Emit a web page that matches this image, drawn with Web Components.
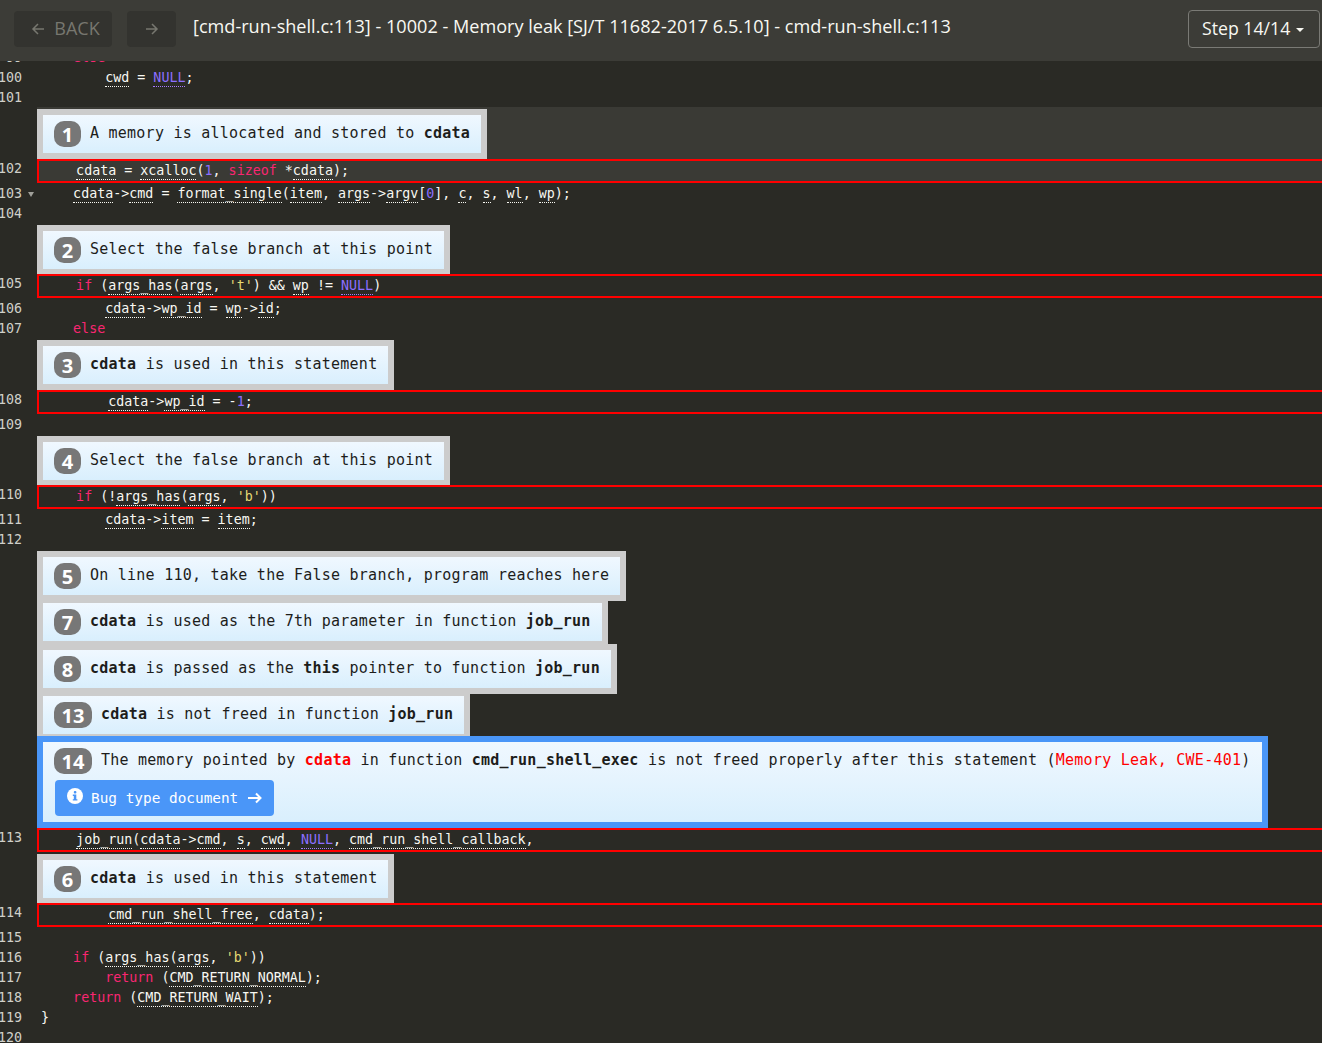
<!DOCTYPE html>
<html>
<head>
<meta charset="utf-8">
<title>Memory leak</title>
<style>
  html, body { margin: 0; height: 100%; background: #2a2a25; overflow: hidden; }
</style>
</head>
<body>
<report-page>
  <report-header slot="header"></report-header>
  <code-line num="99"><c-kw>    else</c-kw></code-line>
  <code-line num="100">        <c-id>cwd</c-id> = <c-nul>NULL</c-nul>;</code-line>
  <code-line num="101"> </code-line>
  <code-line num="102" active marked><bug-bubble slot="bubbles" step="1">A memory is allocated and stored to <b>cdata</b></bug-bubble>    <c-id>cdata</c-id> = <c-id>xcalloc</c-id>(<c-num>1</c-num>, <c-kw>sizeof</c-kw> *<c-id>cdata</c-id>);</code-line>
  <code-line num="103" fold>    <c-id>cdata</c-id>-&gt;<c-id>cmd</c-id> = <c-id>format_single</c-id>(<c-id>item</c-id>, <c-id>args</c-id>-&gt;<c-id>argv</c-id>[<c-num>0</c-num>], <c-id>c</c-id>, <c-id>s</c-id>, <c-id>wl</c-id>, <c-id>wp</c-id>);</code-line>
  <code-line num="104"> </code-line>
  <code-line num="105" marked><bug-bubble slot="bubbles" step="2">Select the false branch at this point</bug-bubble>    <c-kw>if</c-kw> (<c-id>args_has</c-id>(<c-id>args</c-id>, <c-str>'t'</c-str>) &amp;&amp; <c-id>wp</c-id> != <c-nul>NULL</c-nul>)</code-line>
  <code-line num="106">        <c-id>cdata</c-id>-&gt;<c-id>wp_id</c-id> = <c-id>wp</c-id>-&gt;<c-id>id</c-id>;</code-line>
  <code-line num="107"><c-kw>    else</c-kw></code-line>
  <code-line num="108" marked><bug-bubble slot="bubbles" step="3"><b>cdata</b> is used in this statement</bug-bubble>        <c-id>cdata</c-id>-&gt;<c-id>wp_id</c-id> = -<c-num>1</c-num>;</code-line>
  <code-line num="109"> </code-line>
  <code-line num="110" marked><bug-bubble slot="bubbles" step="4">Select the false branch at this point</bug-bubble>    <c-kw>if</c-kw> (!<c-id>args_has</c-id>(<c-id>args</c-id>, <c-str>'b'</c-str>))</code-line>
  <code-line num="111">        <c-id>cdata</c-id>-&gt;<c-id>item</c-id> = <c-id>item</c-id>;</code-line>
  <code-line num="112"> </code-line>
  <code-line num="113" marked><bug-bubble slot="bubbles" step="5">On line 110, take the False branch, program reaches here</bug-bubble><bug-bubble slot="bubbles" step="7"><b>cdata</b> is used as the 7th parameter in function <b>job_run</b></bug-bubble><bug-bubble slot="bubbles" step="8"><b>cdata</b> is passed as the <b>this</b> pointer to function <b>job_run</b></bug-bubble><bug-bubble slot="bubbles" step="13"><b>cdata</b> is not freed in function <b>job_run</b></bug-bubble><bug-bubble slot="bubbles" step="14" current>The memory pointed by <b style="color:#f00">cdata</b> in function <b>cmd_run_shell_exec</b> is not freed properly after this statement (<span style="color:#f00">Memory Leak, CWE-401</span>)<doc-button slot="extra">Bug type document</doc-button></bug-bubble>    <c-id>job_run</c-id>(<c-id>cdata</c-id>-&gt;<c-id>cmd</c-id>, <c-id>s</c-id>, <c-id>cwd</c-id>, <c-nul>NULL</c-nul>, <c-id>cmd_run_shell_callback</c-id>,</code-line>
  <code-line num="114" marked><bug-bubble slot="bubbles" step="6"><b>cdata</b> is used in this statement</bug-bubble>        <c-id>cmd_run_shell_free</c-id>, <c-id>cdata</c-id>);</code-line>
  <code-line num="115"> </code-line>
  <code-line num="116">    <c-kw>if</c-kw> (<c-id>args_has</c-id>(<c-id>args</c-id>, <c-str>'b'</c-str>))</code-line>
  <code-line num="117">        <c-kw>return</c-kw> (<c-id>CMD_RETURN_NORMAL</c-id>);</code-line>
  <code-line num="118">    <c-kw>return</c-kw> (<c-id>CMD_RETURN_WAIT</c-id>);</code-line>
  <code-line num="119">}</code-line>
  <code-line num="120"> </code-line>
</report-page>

<script>
  const MONO = '"DejaVu Sans Mono", "Liberation Mono", monospace';
  const SANS = '"Open Sans", "Noto Sans", sans-serif';

  // small inline tokens of the code view
  function defineToken(name, css) {
    customElements.define(name, class extends HTMLElement {
      constructor() {
        super();
        this.attachShadow({ mode: "open" }).innerHTML = `<style>:host{${css}}</style><slot></slot>`;
      }
    });
  }
  defineToken("c-id", "border-bottom:1px dotted #f8f8f2;padding-bottom:1px;");
  defineToken("c-kw", "color:#f92672;");
  defineToken("c-num", "color:#8c6fff;");
  defineToken("c-str", "color:#e6db74;");
  defineToken("c-nul", "color:#8c6fff;border-bottom:1px dotted #a67bff;padding-bottom:1px;");

  customElements.define("report-page", class extends HTMLElement {
    constructor() {
      super();
      this.attachShadow({ mode: "open" }).innerHTML = `
        <style>
          :host { display: flex; flex-direction: column; height: 100vh; overflow: hidden; }
          .pane { flex: 1; min-height: 0; overflow: hidden; }
          .inner { margin-top: -14px; }
        </style>
        <slot name="header"></slot>
        <div class="pane"><div class="inner"><slot></slot></div></div>
      `;
    }
  });

  customElements.define("report-header", class extends HTMLElement {
    constructor() {
      super();
      this.attachShadow({ mode: "open" }).innerHTML = `
        <style>
          :host {
            display: flex; align-items: center; height: 61px; flex: none;
            position: relative; z-index: 2; box-sizing: border-box;
            padding: 0 2px 0 14px; background: #3c3c37; color: #f8f8f2;
            font: 18.1px ${SANS};
          }
          .nav {
            display: flex; align-items: center; justify-content: center; gap: 9px;
            height: 36px; background: #33332f; border-radius: 4px;
            color: #77776f; font-size: 18px; margin-top: -3px;
          }
          .nav span { margin-top: -2px; }
          .back { width: 98px; padding-left: 5px; box-sizing: border-box; }
          .next { width: 49px; margin-left: 15px; }
          svg { display: block; }
          .title { margin: -10px 0 0 17px; flex: 1; white-space: nowrap; }
          .step {
            display: flex; align-items: center; gap: 6px;
            box-sizing: border-box; width: 132px; height: 38px; margin-top: -3px;
            padding-left: 13px; border: 1px solid #7a7a75; border-radius: 4px;
            font-size: 17.7px;
          }
          .step span:first-child { margin-top: -2px; }
          .caret { width: 0; height: 0; border: 4px solid transparent; border-top: 4px solid #f8f8f2; border-bottom: 0; margin-top: 2px; }
        </style>
        <div class="nav back">
          <svg width="14" height="14" viewBox="0 0 14 14" fill="none" stroke="#77776f" stroke-width="1.5"><path d="M13 7H2M7 2L2 7l5 5"/></svg>
          <span>BACK</span>
        </div>
        <div class="nav next">
          <svg width="14" height="14" viewBox="0 0 14 14" fill="none" stroke="#77776f" stroke-width="1.5"><path d="M1 7h11M7 2l5 5-5 5"/></svg>
        </div>
        <div class="title">[cmd-run-shell.c:113] - 10002 - Memory leak [SJ/T 11682-2017 6.5.10] - cmd-run-shell.c:113</div>
        <div class="step"><span>Step 14/14</span><span class="caret"></span></div>
      `;
    }
  });

  customElements.define("code-line", class extends HTMLElement {
    static get observedAttributes() {
      return ["num"];
    }

    constructor() {
      super();
      this.attachShadow({ mode: "open" }).innerHTML = `
        <style>
          :host {
            display: flex; color: #f8f8f2;
            font: 13.33px/20px ${MONO};
          }
          .gutter {
            flex: none; width: 37px; box-sizing: border-box; position: relative;
            display: flex; align-items: flex-end; justify-content: flex-end;
            padding-right: 15px; color: #d0d0ca; overflow: hidden;
          }
          .num { position: relative; top: 1px; }
          :host([marked]) .num { margin-bottom: 5px; }
          .fold { display: none; position: absolute; right: 3px; bottom: 6px; width: 0; height: 0;
            border: 3px solid transparent; border-top: 5px solid #a0a09a; border-bottom: 0; }
          :host([fold]) .fold { display: block; }
          .body { flex: 1; min-width: 0; }
          :host([active]) .body { background: #3a3a35; }
          .line { height: 20px; padding-left: 4px; white-space: pre; position: relative; top: 1px; }
          :host([marked]) .line {
            top: 0; height: 20px; padding-left: 5px; border: 2px solid #f00; border-right: 0;
            line-height: 20px;
          }
          .bubbles { display: flex; flex-direction: column; align-items: flex-start; }
          :host([marked]) .bubbles { padding-top: 2px; }
        </style>
        <div class="gutter"><span class="num"></span><span class="fold"></span></div>
        <div class="body">
          <div class="bubbles"><slot name="bubbles"></slot></div>
          <div class="line"><slot></slot></div>
        </div>
      `;
    }

    attributeChangedCallback(attrName, oldVal, newVal) {
      this.shadowRoot.querySelector(".num").textContent = newVal;
    }
  });

  customElements.define("bug-bubble", class extends HTMLElement {
    constructor() {
      super();
      this.attachShadow({ mode: "open" }).innerHTML = `
        <style>
          :host {
            display: block; box-sizing: border-box; position: relative;
            border: 6px solid #ccc; margin-bottom: -0.5px; color: #1d1d1b;
            font: 15px/25px ${MONO}; letter-spacing: .24px; white-space: nowrap;
          }
          :host(:not(:first-child)) { margin-top: -3.17px; }
          :host([current]) { border-color: #4a96f8; }
          .inner {
            padding: 6px 11px; background: linear-gradient(#f0f8ff, #d9effd);
          }
          .row { display: flex; gap: 9px; height: 26px; }
          .badge {
            flex: none; min-width: 27px; height: 26px; box-sizing: border-box; padding: 0 7.5px;
            border-radius: 10px; background: #777; color: #fff; text-align: center;
            font: bold 20px/27px ${SANS}; letter-spacing: 0;
          }
        </style>
        <div class="inner">
          <div class="row"><span class="badge"></span><span><slot></slot></span></div>
          <slot name="extra"></slot>
        </div>
      `;
    }

    connectedCallback() {
      this.shadowRoot.querySelector(".badge").textContent = this.getAttribute("step");
    }
  });

  customElements.define("doc-button", class extends HTMLElement {
    constructor() {
      super();
      this.attachShadow({ mode: "open" }).innerHTML = `
        <style>
          :host {
            display: flex; align-items: center; box-sizing: border-box;
            width: 219px; height: 36px; margin: 6px 0 0 1px; padding-left: 12px;
            background: #4a96f8; border-radius: 4px; color: #fff;
            font: 14.4px/20px ${MONO}; letter-spacing: 0;
          }
          .i { margin: -4px 8px 0 0; }
          .a { margin-left: 10px; margin-top: -1px; }
          svg { display: block; }
        </style>
        <svg class="i" width="16" height="16" viewBox="0 0 16 16"><circle cx="8" cy="8" r="8" fill="#fff"/><rect x="6.8" y="3" width="2.6" height="2.4" rx="1" fill="#4a96f8"/><path d="M5.8 6.6h3.5v4.6h1.1v1.4H5.8v-1.4h1V8H5.8z" fill="#4a96f8"/></svg>
        <span><slot></slot></span>
        <svg class="a" width="14" height="12" viewBox="0 0 14 12" fill="none" stroke="#fff" stroke-width="2"><path d="M0 6h12M8 1.5L12.5 6 8 10.5"/></svg>
      `;
    }
  });
</script>
</body>
</html>
